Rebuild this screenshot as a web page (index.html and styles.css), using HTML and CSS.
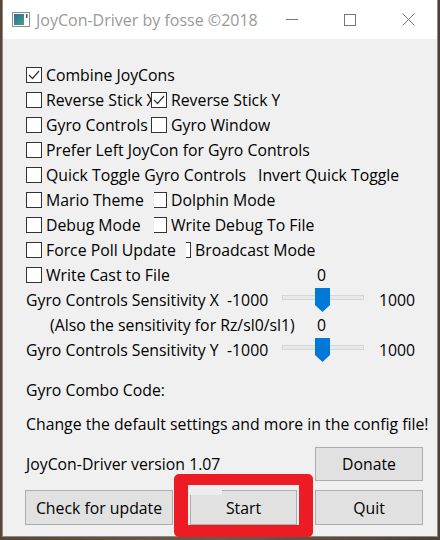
FILE: index.html
```html
<!DOCTYPE html>
<html>
<head>
<meta charset="utf-8">
<link rel="stylesheet" href="styles.css">
</head>
<body>
<div class="window">
  <div class="titlebar">
    <svg class="appicon" width="18" height="15" viewBox="0 0 18 15">
      <defs>
        <linearGradient id="g" x1="0" y1="0" x2="1" y2="1">
          <stop offset="0" stop-color="#2f69b3"/>
          <stop offset="1" stop-color="#47a666"/>
        </linearGradient>
      </defs>
      <rect x="0.5" y="0.5" width="17" height="14" fill="#fff" stroke="#8d8d8d"/>
      <rect x="2" y="2" width="10" height="11" fill="url(#g)"/>
      <rect x="14" y="2" width="1.5" height="4" fill="#555"/>
    </svg>
    <span class="title">JoyCon-Driver by fosse ©2018</span>
    <div class="capbtns">
      <span class="capbtn"><span class="min"></span></span>
      <span class="capbtn"><span class="max"></span></span>
      <span class="capbtn">
        <svg width="13" height="13" viewBox="0 0 13 13"><path d="M0.5 0.5 L12.5 12.5 M12.5 0.5 L0.5 12.5" stroke="#777" stroke-width="1" fill="none"/></svg>
      </span>
    </div>
  </div>
  <div class="client">
    <div class="row">
      <label class="cell"><span class="cb"><svg width="14" height="14" viewBox="0 0 14 14"><path d="M2 7 L5.5 10.5 L12 3" stroke="#333" stroke-width="1.2" fill="none"/></svg></span><span>Combine JoyCons</span></label>
    </div>
    <div class="row">
      <label class="cell w125"><span class="cb"></span><span>Reverse Stick X</span></label>
      <label class="cell"><span class="cb"><svg width="14" height="14" viewBox="0 0 14 14"><path d="M2 7 L5.5 10.5 L12 3" stroke="#333" stroke-width="1.2" fill="none"/></svg></span><span>Reverse Stick Y</span></label>
    </div>
    <div class="row">
      <label class="cell w125"><span class="cb"></span><span>Gyro Controls</span></label>
      <label class="cell"><span class="cb"></span><span>Gyro Window</span></label>
    </div>
    <div class="row">
      <label class="cell"><span class="cb"></span><span>Prefer Left JoyCon for Gyro Controls</span></label>
    </div>
    <div class="row">
      <label class="cell w232"><span class="cb"></span><span>Quick Toggle Gyro Controls</span></label>
      <span>Invert Quick Toggle</span>
    </div>
    <div class="row">
      <label class="cell w128"><span class="cb"></span><span>Mario Theme</span></label>
      <label class="cell"><span class="cb part p13"></span><span>Dolphin Mode</span></label>
    </div>
    <div class="row">
      <label class="cell w128"><span class="cb"></span><span>Debug Mode</span></label>
      <label class="cell"><span class="cb part p13"></span><span>Write Debug To File</span></label>
    </div>
    <div class="row">
      <label class="cell w160"><span class="cb"></span><span>Force Poll Update</span></label>
      <label class="cell"><span class="cb part p5"></span><span>Broadcast Mode</span></label>
    </div>
    <div class="row">
      <label class="cell w291"><span class="cb"></span><span>Write Cast to File</span></label>
      <span>0</span>
    </div>
    <div class="row">
      <span class="slabel">Gyro Controls Sensitivity X</span>
      <span class="smin">-1000</span>
      <span class="slider"><span class="track"></span><svg class="thumb" width="15" height="24" viewBox="0 0 15 24"><path d="M0 0 H15 V17 L7.5 24 L0 17 Z" fill="#0078d7"/></svg></span>
      <span class="smax">1000</span>
    </div>
    <div class="row">
      <span class="also">(Also the sensitivity for Rz/sl0/sl1)</span>
      <span>0</span>
    </div>
    <div class="row">
      <span class="slabel">Gyro Controls Sensitivity Y</span>
      <span class="smin">-1000</span>
      <span class="slider"><span class="track"></span><svg class="thumb" width="15" height="24" viewBox="0 0 15 24"><path d="M0 0 H15 V17 L7.5 24 L0 17 Z" fill="#0078d7"/></svg></span>
      <span class="smax">1000</span>
    </div>
    <div class="row combo">Gyro Combo Code:</div>
    <div class="row change">Change the default settings and more in the config file!</div>
    <div class="verrow">
      <span>JoyCon-Driver version 1.07</span>
      <button class="btn donate">Donate</button>
    </div>
    <div class="btnrow">
      <button class="btn check">Check for update</button>
      <button class="btn start">Start</button>
      <button class="btn quit">Quit</button>
    </div>
  </div>
  <div class="patch"></div>
  <div class="redbox"></div>
</div>
</body>
</html>
```
FILE: styles.css
```css
* { box-sizing: border-box; }
html, body { margin: 0; padding: 0; }
body {
  width: 440px;
  height: 540px;
  overflow: hidden;
  background: linear-gradient(90deg, #5a4636, #6e5a48 50%, #4e4038);
  font-family: "Open Sans", "Noto Sans", sans-serif;
}
.window {
  position: relative;
  margin-left: 2px;
  width: 436px;
  height: 537px;
  border: 1px solid #8f8a85;
  border-top: none;
  background: #f0f0f0;
  display: flex;
  flex-direction: column;
}
.titlebar {
  height: 39px;
  flex: none;
  background: #fff;
  display: flex;
  align-items: center;
}
.appicon { margin-left: 9px; flex: none; }
.title {
  margin-left: 6px;
  font-size: 16px;
  color: #999;
  white-space: nowrap;
}
.capbtns { margin-left: auto; display: flex; height: 100%; }
.capbtn {
  width: 58px;
  height: 100%;
  display: flex;
  align-items: center;
  justify-content: center;
}
.min { width: 12px; height: 1px; background: #777; }
.max { width: 12px; height: 12px; border: 1px solid #777; }
.client {
  flex: 1;
  padding: 23px 14px 0 23px;
  font-size: 15.8px;
  color: #000;
}
.row {
  height: 25px;
  display: flex;
  align-items: center;
  white-space: nowrap;
}
.cell {
  display: flex;
  align-items: center;
  gap: 4px;
  overflow: hidden;
  flex: none;
  height: 100%;
}
.w125 { width: 125px; }
.w128 { width: 128px; }
.w160 { width: 160px; }
.w232 { width: 232px; }
.w291 { width: 291px; }
.cb {
  width: 16px;
  height: 16px;
  border: 1px solid #333;
  background: #fff;
  flex: none;
  display: flex;
  align-items: center;
  justify-content: center;
}
.cb.part { border-left: none; }
.cb.p13 { width: 13px; }
.cb.p5 { width: 5px; }
.slabel { width: 201px; flex: none; }
.smin { width: 55px; flex: none; }
.slider {
  position: relative;
  width: 82px;
  height: 25px;
  flex: none;
}
.track {
  position: absolute;
  left: 0;
  right: 0;
  top: 8px;
  height: 5px;
  background: #e7eaea;
  border: 1px solid #d6d6d6;
}
.thumb { position: absolute; left: 33px; top: 1px; }
.smax { margin-left: 15px; }
.also { margin-left: 24px; width: 267px; flex: none; }
.combo { margin-top: 15px; }
.change { margin-top: 9px; }
.verrow {
  margin-top: 11px;
  height: 34px;
  display: flex;
  align-items: center;
  justify-content: space-between;
}
.btn {
  font: inherit;
  color: #000;
  background: #e1e1e1;
  border: 1px solid #adadad;
  padding: 0;
  margin: 0;
}
.donate { width: 108px; height: 34px; }
.btnrow {
  margin-top: 9px;
  display: flex;
  height: 35px;
}
.btnrow .btn { height: 35px; }
.check { width: 148px; margin-left: -1px; }
.start { width: 107px; margin-left: 17px; }
.quit { width: 108px; margin-left: 18px; }
.patch {
  position: absolute;
  left: 187px;
  top: 490px;
  width: 32px;
  height: 5px;
  background: #ededed;
}
.redbox {
  position: absolute;
  left: 171px;
  top: 474px;
  width: 139px;
  height: 63px;
  border: solid #ed1c24;
  border-width: 11px 14px 12px 14px;
  border-radius: 5px;
}
```
